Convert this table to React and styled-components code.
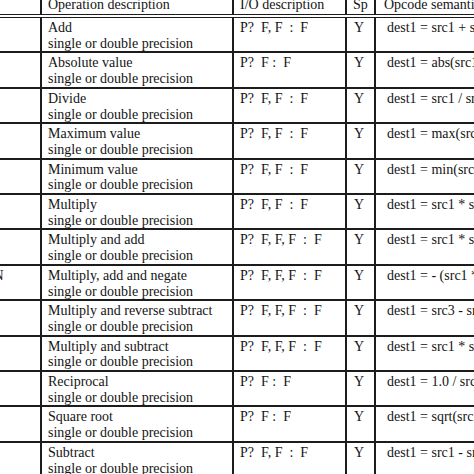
import React from "react";
import styled, { createGlobalStyle } from "styled-components";

const GlobalStyle = createGlobalStyle`
  html, body {
    margin: 0;
    padding: 0;
    background: #fff;
    overflow: hidden;
  }
`;

const rows = [
  { op: "FADD", name: "Add", io: "P?  F, F  :  F", sem: "dest1 = src1 + src2" },
  { op: "FABS", name: "Absolute value", io: "P?  F :  F", sem: "dest1 = abs(src1)" },
  { op: "FDIV", name: "Divide", io: "P?  F, F  :  F", sem: "dest1 = src1 / src2" },
  { op: "FMAX", name: "Maximum value", io: "P?  F, F  :  F", sem: "dest1 = max(src1, src2)" },
  { op: "FMIN", name: "Minimum value", io: "P?  F, F  :  F", sem: "dest1 = min(src1, src2)" },
  { op: "FMUL", name: "Multiply", io: "P?  F, F  :  F", sem: "dest1 = src1 * src2" },
  { op: "FMADD", name: "Multiply and add", io: "P?  F, F, F  :  F", sem: "dest1 = src1 * src2 + src3" },
  { op: "FMADDN", name: "Multiply, add and negate", io: "P?  F, F, F  :  F", sem: "dest1 = - (src1 * src2 + src3)" },
  { op: "FMRSUB", name: "Multiply and reverse subtract", io: "P?  F, F, F  :  F", sem: "dest1 = src3 - src1 * src2" },
  { op: "FMSUB", name: "Multiply and subtract", io: "P?  F, F, F  :  F", sem: "dest1 = src1 * src2 - src3" },
  { op: "FRCP", name: "Reciprocal", io: "P?  F :  F", sem: "dest1 = 1.0 / src1" },
  { op: "FSQRT", name: "Square root", io: "P?  F :  F", sem: "dest1 = sqrt(src1)" },
  { op: "FSUB", name: "Subtract", io: "P?  F, F  :  F", sem: "dest1 = src1 - src2" },
];

const Sheet = styled.div`
  width: 474px;
  height: 474px;
  overflow: hidden;
  background: #fff;
`;

const Table = styled.table`
  border-collapse: collapse;
  table-layout: fixed;
  width: 640px;
  margin: -7px 0 0 -65px;
  font-family: "Liberation Serif", "Times New Roman", serif;
  font-size: 14px;
  color: #141414;
`;

const HeadCell = styled.th`
  font-weight: normal;
  text-align: left;
  white-space: nowrap;
  line-height: 16px;
  padding: 2px 6px 1px ${(p) => p.$pad || 6}px;
  border: 2px solid #1c1c1c;
  border-bottom: 4px double #1c1c1c;
`;

const Cell = styled.td`
  vertical-align: top;
  white-space: ${(p) => (p.$pre ? "pre" : "nowrap")};
  line-height: 15.7px;
  padding: 2px 6px 0 ${(p) => p.$pad || 6}px;
  border: 2px solid #1c1c1c;
`;

const Sub = styled.div`
  white-space: nowrap;
`;

export default function App() {
  return (
    <Sheet>
      <GlobalStyle />
      <Table>
        <colgroup>
          <col style={{ width: 105 }} />
          <col style={{ width: 192 }} />
          <col style={{ width: 113 }} />
          <col style={{ width: 29 }} />
          <col style={{ width: 201 }} />
        </colgroup>
        <thead>
          <tr>
            <HeadCell>Opcode</HeadCell>
            <HeadCell>Operation description</HeadCell>
            <HeadCell>I/O description</HeadCell>
            <HeadCell>Sp</HeadCell>
            <HeadCell $pad={8}>Opcode semantics</HeadCell>
          </tr>
        </thead>
        <tbody>
          {rows.map((r) => (
            <tr key={r.op}>
              <Cell>{r.op}</Cell>
              <Cell>
                <Sub>{r.name}</Sub>
                <Sub>single or double precision</Sub>
              </Cell>
              <Cell $pre>{r.io}</Cell>
              <Cell $pad={7}>Y</Cell>
              <Cell $pad={11}>{r.sem}</Cell>
            </tr>
          ))}
        </tbody>
      </Table>
    </Sheet>
  );
}
